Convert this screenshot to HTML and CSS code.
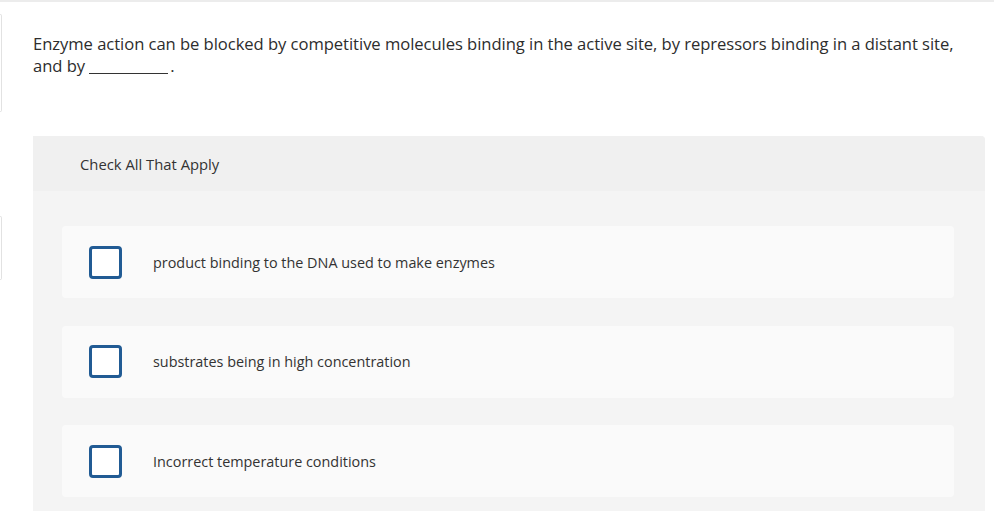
FILE: index.html
```html
<!DOCTYPE html>
<html>
<head>
<meta charset="utf-8">
<link rel="stylesheet" href="styles.css">
</head>
<body>
<div class="page">
  <div class="rail">
    <div class="rail-box rail-box-1"></div>
    <div class="rail-box rail-box-2"></div>
  </div>
  <main class="content">
    <p class="question">Enzyme action can be blocked by competitive molecules binding in the active site, by repressors binding in a distant site, <span class="tail">and by <span class="blank"></span>.</span></p>
    <section class="choices">
      <div class="choices-head">Check All That Apply</div>
      <div class="choices-body">
        <label class="option"><span class="box"></span><span class="option-text">product binding to the DNA used to make enzymes</span></label>
        <label class="option"><span class="box"></span><span class="option-text">substrates being in high concentration</span></label>
        <label class="option"><span class="box"></span><span class="option-text">Incorrect temperature conditions</span></label>
      </div>
    </section>
  </main>
</div>
</body>
</html>
```
FILE: styles.css
```css
html, body {
  margin: 0;
  padding: 0;
  background: #fff;
}
body {
  font-family: "Open Sans", "Liberation Sans", sans-serif;
  color: #333;
  overflow: hidden;
  height: 511px;
}
.page {
  display: flex;
  border-top: 2px solid #ececec;
  min-height: 509px;
}
.rail {
  width: 2px;
  flex: none;
  display: flex;
  flex-direction: column;
}
.rail-box {
  border: 1px solid #e2e2e2;
  border-left: none;
  border-radius: 0 4px 4px 0;
  width: 1px;
}
.rail-box-1 {
  margin-top: 12px;
  height: 96px;
}
.rail-box-2 {
  margin-top: 104px;
  height: 62px;
}
.content {
  flex: 1;
  padding: 31px 9px 0 31px;
}
.question {
  margin: 0;
  font-size: 16.6px;
  line-height: 22px;
  color: #2d2d2d;
  letter-spacing: -0.05px;
}
.tail {
  white-space: nowrap;
}
.blank {
  display: inline-block;
  width: 79px;
  height: 1px;
  background: #333;
  vertical-align: -2px;
  margin: 0 2px 0 0;
}
.choices {
  margin-top: 59px;
  background: #f4f4f4;
  border-radius: 0 4px 0 0;
  overflow: hidden;
}
.choices-head {
  background: #f0f0f0;
  height: 55px;
  display: flex;
  align-items: center;
  padding-left: 47px;
  font-size: 14.8px;
  color: #333;
}
.choices-body {
  display: flex;
  flex-direction: column;
  gap: 27.5px;
  padding: 35px 31px 20px 29px;
}
.option {
  display: flex;
  align-items: center;
  height: 72px;
  background: #fafafa;
  border-radius: 4px;
  padding-left: 27px;
}
.box {
  width: 27px;
  height: 27px;
  border: 3px solid #215b94;
  border-radius: 4px;
  background: #fff;
  flex: none;
}
.option-text {
  margin-left: 31px;
  font-size: 14.4px;
  color: #333;
}
```
